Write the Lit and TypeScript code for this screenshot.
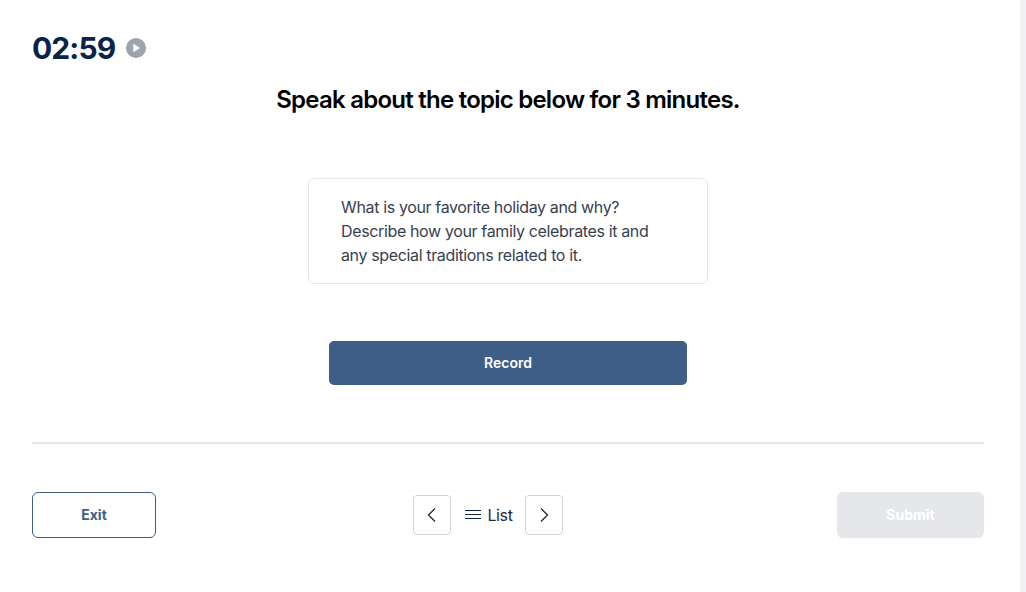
import { LitElement, html, css } from "lit";
import { customElement } from "lit/decorators.js";

@customElement("app-root")
export class AppRoot extends LitElement {
  static styles = css`
    :host { display: flex; width: 1026px; height: 592px; overflow: hidden; background: #fff; font-family: Inter, "Liberation Sans", sans-serif; }
    .main { width: 1020px; box-sizing: border-box; padding: 30px 36px 0 32px; display: flex; flex-direction: column; }
    .rail { width: 6px; height: 592px; background: #f1f1f3; }
    .timer { display: flex; align-items: center; gap: 11px; height: 36px; color: #0b2346; font-size: 30px; font-weight: 700; line-height: 36px; letter-spacing: -0.9px; }
    .play { display: block; width: 20px; height: 20px; }
    h1 { margin: 16px 0 0; text-align: center; font-size: 24px; line-height: 36px; font-weight: 600; color: #000; letter-spacing: -0.76px; }
    .card { align-self: center; box-sizing: border-box; width: 400px; height: 106px; margin-top: 60px; padding: 16px 32px; border: 1px solid #e5e7eb; border-radius: 6px; font-size: 16px; line-height: 24px; color: #374151; letter-spacing: -0.36px; }
    .record { align-self: center; box-sizing: border-box; width: 358px; height: 44px; margin-top: 57px; padding: 0 0 1px; border: 0; border-radius: 5px; background: #3e5e87; color: #fff; font: 600 14px Inter, "Liberation Sans", sans-serif; }
    hr { width: 100%; height: 2px; margin: 57px 0 0; border: 0; background: #e5e7eb; }
    .footer { display: flex; align-items: center; justify-content: space-between; margin-top: 48px; height: 46px; }
    .exit, .submit { box-sizing: border-box; height: 46px; padding: 0 0 1px; border-radius: 6px; font: 700 14px Inter, "Liberation Sans", sans-serif; }
    .exit { width: 124px; background: #fff; border: 1px solid #3e5e87; color: #3e5e87; }
    .submit { width: 147px; background: #e5e7eb; border: 0; color: #fff; }
    .nav { display: flex; align-items: center; margin-right: 17px; }
    .arrow { box-sizing: border-box; display: flex; align-items: center; justify-content: center; width: 38px; height: 40px; padding: 0; background: #fff; border: 1px solid #d1d5db; border-radius: 4px; color: #1f2937; }
    .list { display: flex; align-items: center; gap: 6px; margin: 0 12px 0 14px; font-size: 16px; color: #1f2937; letter-spacing: -0.38px; }
    .bars { color: #0b2346; }
    svg { display: block; }
  `;

  render() {
    return html`
      <div class="main">
        <div class="timer">
          <span>02:59</span>
          <svg class="play" viewBox="0 0 20 20"><circle cx="10" cy="10" r="10" fill="#9ca3af"/><path d="M7.2 5.8v8.4l7-4.2z" fill="#fff"/></svg>
        </div>
        <h1>Speak about the topic below for 3 minutes.</h1>
        <div class="card">What is your favorite holiday and why? Describe how your family celebrates it and any special traditions related to it.</div>
        <button class="record">Record</button>
        <hr />
        <div class="footer">
          <button class="exit">Exit</button>
          <div class="nav">
            <button class="arrow" aria-label="Previous">
              <svg width="20" height="20" viewBox="0 0 20 20" fill="none" stroke="currentColor" stroke-width="1.3"><path d="M13 3.5L6.5 10l6.5 6.5"/></svg>
            </button>
            <span class="list">
              <svg class="bars" width="16" height="12" viewBox="0 0 16 12" fill="none" stroke="currentColor" stroke-width="1.2"><path d="M0 1.5h16M0 5.5h16M0 9.5h16"/></svg>
              List
            </span>
            <button class="arrow" aria-label="Next">
              <svg width="20" height="20" viewBox="0 0 20 20" fill="none" stroke="currentColor" stroke-width="1.3"><path d="M7 3.5L13.5 10 7 16.5"/></svg>
            </button>
          </div>
          <button class="submit">Submit</button>
        </div>
      </div>
      <div class="rail"></div>
    `;
  }
}
